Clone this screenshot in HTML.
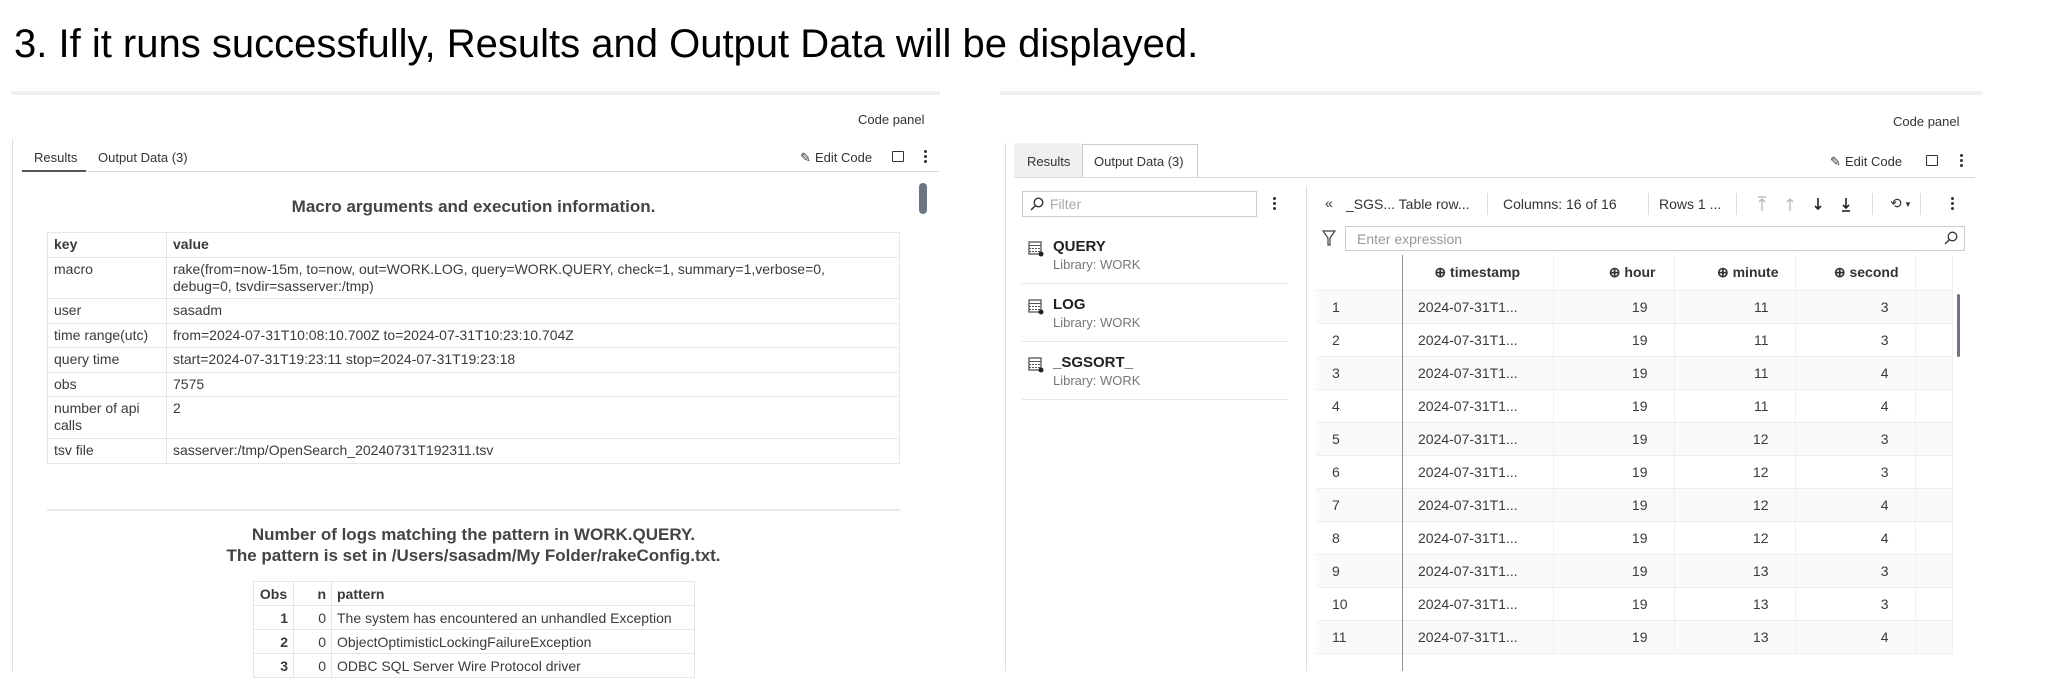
<!DOCTYPE html>
<html><head><meta charset="utf-8"><style>
*{margin:0;padding:0;box-sizing:border-box}
body{width:2062px;height:671px;background:#fff;font-family:"Liberation Sans",Arial,sans-serif;position:relative;overflow:hidden;color:#333}
.a{position:absolute;white-space:nowrap}
.t13{font-size:13px}
.kb{position:absolute;width:3px}
.kb i{display:block;width:3px;height:3px;background:#333;border-radius:50%;margin-bottom:2px}
table{border-collapse:collapse}
.mt td{border:1px solid #e6e6e6;font-size:14px;padding:3px 6px;vertical-align:top;color:#3a3a3a;line-height:17px}
.ot td{border:1px solid #e6e6e6;font-size:14px;padding:3px 5px;height:24px;color:#3a3a3a}
.dt td{font-size:14px;color:#3a3a3a;height:33px;border-bottom:1px solid #eee;border-right:1px solid #f0f0f0}
</style></head><body>
<div class="a" style="left:14px;top:22px;font-size:40px;color:#000">3. If it runs successfully, Results and Output Data will be displayed.</div>

<!-- LEFT PANEL -->
<div class="a" style="left:11px;top:91px;width:929px;height:4px;background:#eef0f2"></div>
<div class="a t13" style="left:858px;top:112px;color:#333">Code panel</div>
<div class="a" style="left:12px;top:139px;width:1px;height:532px;background:#ddd"></div>
<div class="a t13" style="left:34px;top:150px">Results</div>
<div class="a t13" style="left:98px;top:150px">Output Data (3)</div>
<div class="a" style="left:22px;top:171px;width:917px;height:1px;background:#d8dadd"></div>
<div class="a" style="left:22px;top:170px;width:64px;height:2px;background:#555"></div>
<div class="a" style="left:800px;top:150px;font-size:13px">✎</div>
<div class="a t13" style="left:815px;top:150px">Edit Code</div>
<div class="a" style="left:892px;top:151px;width:12px;height:11px;border:1.5px solid #333;border-radius:1px"></div>
<div class="kb" style="left:924px;top:150px"><i></i><i></i><i></i></div>
<div class="a" style="left:919px;top:183px;width:8px;height:31px;background:#6b7584;border-radius:4px"></div>
<div class="a" style="left:47px;top:197px;width:853px;text-align:center;font-size:17px;font-weight:600;color:#444">Macro arguments and execution information.</div>
<table class="mt a" style="left:47px;top:232px;width:853px">
<tr style="height:25px"><td style="width:119px;font-weight:bold">key</td><td style="font-weight:bold">value</td></tr>
<tr style="height:41px"><td>macro</td><td>rake(from=now-15m, to=now, out=WORK.LOG, query=WORK.QUERY, check=1, summary=1,verbose=0,<br>debug=0, tsvdir=sasserver:/tmp)</td></tr>
<tr style="height:25px"><td>user</td><td>sasadm</td></tr>
<tr style="height:24px"><td>time range(utc)</td><td>from=2024-07-31T10:08:10.700Z to=2024-07-31T10:23:10.704Z</td></tr>
<tr style="height:25px"><td>query time</td><td>start=2024-07-31T19:23:11 stop=2024-07-31T19:23:18</td></tr>
<tr style="height:24px"><td>obs</td><td>7575</td></tr>
<tr style="height:42px"><td>number of api<br>calls</td><td>2</td></tr>
<tr style="height:25px"><td>tsv file</td><td>sasserver:/tmp/OpenSearch_20240731T192311.tsv</td></tr>
</table>
<div class="a" style="left:47px;top:509px;width:853px;height:2px;background:#e6e8ea"></div>
<div class="a" style="left:47px;top:524px;width:853px;text-align:center;font-size:17px;font-weight:600;color:#444;line-height:21px">Number of logs matching the pattern in WORK.QUERY.<br>The pattern is set in /Users/sasadm/My Folder/rakeConfig.txt.</div>
<table class="ot a" style="left:253px;top:581px;width:442px">
<tr><td style="width:40px;font-weight:bold;text-align:center">Obs</td><td style="width:38px;font-weight:bold;text-align:right">n</td><td style="font-weight:bold">pattern</td></tr>
<tr><td style="font-weight:bold;text-align:right">1</td><td style="text-align:right">0</td><td>The system has encountered an unhandled Exception</td></tr>
<tr><td style="font-weight:bold;text-align:right">2</td><td style="text-align:right">0</td><td>ObjectOptimisticLockingFailureException</td></tr>
<tr><td style="font-weight:bold;text-align:right">3</td><td style="text-align:right">0</td><td>ODBC SQL Server Wire Protocol driver</td></tr>
</table>

<!-- RIGHT PANEL -->
<div class="a" style="left:1000px;top:91px;width:982px;height:4px;background:#eef0f2"></div>
<div class="a t13" style="left:1893px;top:114px">Code panel</div>
<div class="a" style="left:1005px;top:143px;width:1px;height:528px;background:#ddd"></div>
<div class="a" style="left:1014px;top:143px;width:68px;height:34px;background:#eef0f2"></div>
<div class="a t13" style="left:1027px;top:154px">Results</div>
<div class="a" style="left:1082px;top:144px;width:116px;height:34px;border:1px solid #c8cbd0;border-bottom:none;background:#fff"></div>
<div class="a t13" style="left:1094px;top:154px">Output Data (3)</div>
<div class="a" style="left:1014px;top:177px;width:961px;height:1px;background:#d8dadd"></div>
<div class="a" style="left:1830px;top:154px;font-size:13px">✎</div>
<div class="a t13" style="left:1845px;top:154px">Edit Code</div>
<div class="a" style="left:1926px;top:155px;width:12px;height:11px;border:1.5px solid #333;border-radius:1px"></div>
<div class="kb" style="left:1960px;top:154px"><i></i><i></i><i></i></div>

<div class="a" style="left:1022px;top:191px;width:235px;height:26px;border:1px solid #ccc"></div>
<svg class="a" style="left:1030px;top:197px" width="14" height="14"><circle cx="8.5" cy="5.5" r="4.3" fill="none" stroke="#333" stroke-width="1.4"/><line x1="5.5" y1="8.5" x2="1" y2="13" stroke="#333" stroke-width="1.5"/></svg>
<div class="a" style="left:1050px;top:196px;font-size:14px;color:#aaa">Filter</div>
<div class="kb" style="left:1273px;top:197px"><i></i><i></i><i></i></div>
<div class="a" style="left:1306px;top:186px;width:1px;height:485px;background:#ddd"></div>

<svg class="a" style="left:1028px;top:241px" width="16" height="16"><rect x="1" y="1" width="12" height="12" fill="none" stroke="#555" stroke-width="1.3"/><line x1="1" y1="4.5" x2="13" y2="4.5" stroke="#555"/><line x1="1" y1="7.5" x2="13" y2="7.5" stroke="#555" stroke-dasharray="2 1"/><line x1="1" y1="10.5" x2="13" y2="10.5" stroke="#555" stroke-dasharray="2 1"/><circle cx="13" cy="13" r="2.5" fill="#222"/></svg>
<div class="a" style="left:1053px;top:238px;font-size:15px;font-weight:bold;color:#222">QUERY</div>
<div class="a t13" style="left:1053px;top:257px;color:#777">Library: WORK</div>
<div class="a" style="left:1022px;top:283px;width:266px;height:1px;background:#e6e6e6"></div>
<svg class="a" style="left:1028px;top:299px" width="16" height="16"><rect x="1" y="1" width="12" height="12" fill="none" stroke="#555" stroke-width="1.3"/><line x1="1" y1="4.5" x2="13" y2="4.5" stroke="#555"/><line x1="1" y1="7.5" x2="13" y2="7.5" stroke="#555" stroke-dasharray="2 1"/><line x1="1" y1="10.5" x2="13" y2="10.5" stroke="#555" stroke-dasharray="2 1"/><circle cx="13" cy="13" r="2.5" fill="#222"/></svg>
<div class="a" style="left:1053px;top:296px;font-size:15px;font-weight:bold;color:#222">LOG</div>
<div class="a t13" style="left:1053px;top:315px;color:#777">Library: WORK</div>
<div class="a" style="left:1022px;top:341px;width:266px;height:1px;background:#e6e6e6"></div>
<svg class="a" style="left:1028px;top:357px" width="16" height="16"><rect x="1" y="1" width="12" height="12" fill="none" stroke="#555" stroke-width="1.3"/><line x1="1" y1="4.5" x2="13" y2="4.5" stroke="#555"/><line x1="1" y1="7.5" x2="13" y2="7.5" stroke="#555" stroke-dasharray="2 1"/><line x1="1" y1="10.5" x2="13" y2="10.5" stroke="#555" stroke-dasharray="2 1"/><circle cx="13" cy="13" r="2.5" fill="#222"/></svg>
<div class="a" style="left:1053px;top:354px;font-size:15px;font-weight:bold;color:#222">_SGSORT_</div>
<div class="a t13" style="left:1053px;top:373px;color:#777">Library: WORK</div>
<div class="a" style="left:1022px;top:399px;width:266px;height:1px;background:#e6e6e6"></div>

<!-- toolbar -->
<div class="a" style="left:1325px;top:195px;font-size:14px">«</div>
<div class="a" style="left:1346px;top:196px;font-size:14px">_SGS... Table row...</div>
<div class="a" style="left:1487px;top:193px;width:1px;height:22px;background:#ddd"></div>
<div class="a" style="left:1503px;top:196px;font-size:14px">Columns: 16 of 16</div>
<div class="a" style="left:1648px;top:193px;width:1px;height:22px;background:#ddd"></div>
<div class="a" style="left:1659px;top:196px;font-size:14px">Rows 1 ...</div>
<div class="a" style="left:1736px;top:193px;width:1px;height:22px;background:#ddd"></div>
<svg class="a" style="left:1755px;top:196px" width="100" height="16"><g stroke="#bbb" stroke-width="1.4" fill="none"><line x1="3" y1="1" x2="11" y2="1"/><line x1="7" y1="3" x2="7" y2="15"/><path d="M4 6 L7 3 L10 6"/><line x1="35" y1="3" x2="35" y2="15"/><path d="M32 6 L35 3 L38 6"/></g><g stroke="#222" stroke-width="1.6" fill="none"><line x1="63" y1="2" x2="63" y2="13"/><path d="M60 10 L63 13 L66 10"/><line x1="91" y1="2" x2="91" y2="12"/><path d="M88 9 L91 12 L94 9"/><line x1="87" y1="15" x2="95" y2="15"/></g></svg>
<div class="a" style="left:1872px;top:193px;width:1px;height:22px;background:#ddd"></div>
<div class="a" style="left:1890px;top:195px;font-size:14px">⟲<span style="font-size:8px;vertical-align:middle"> ▼</span></div>
<div class="a" style="left:1920px;top:193px;width:1px;height:22px;background:#ddd"></div>
<div class="kb" style="left:1951px;top:197px"><i></i><i></i><i></i></div>

<svg class="a" style="left:1322px;top:230px" width="14" height="16"><path d="M1 1 H13 L8 8 V15 H6 V8 Z" fill="none" stroke="#444" stroke-width="1.2"/></svg>
<div class="a" style="left:1345px;top:226px;width:620px;height:25px;border:1px solid #ccc"></div>
<div class="a" style="left:1357px;top:231px;font-size:14px;color:#999">Enter expression</div>
<svg class="a" style="left:1944px;top:231px" width="14" height="14"><circle cx="8.5" cy="5.5" r="4.3" fill="none" stroke="#333" stroke-width="1.3"/><line x1="5.5" y1="8.5" x2="1" y2="13" stroke="#333" stroke-width="1.4"/></svg>

<!-- data table -->
<table class="dt a" style="left:1316px;top:255px;width:637px">
<tr style="height:35px"><td style="width:86px;border-right:none"></td><td style="width:151px;text-align:center;font-weight:600;color:#333">⊕ timestamp</td><td style="width:121px;text-align:right;padding-right:18px;font-weight:600;color:#333">⊕ hour</td><td style="width:121px;text-align:right;padding-right:16px;font-weight:600;color:#333">⊕ minute</td><td style="width:120px;text-align:right;padding-right:16px;font-weight:600;color:#333">⊕ second</td><td></td></tr>
<tr style="background:#fafafa"><td style="padding-left:16px;border-right:none">1</td><td style="padding-left:16px">2024-07-31T1...</td><td style="text-align:right;padding-right:26px">19</td><td style="text-align:right;padding-right:26px">11</td><td style="text-align:right;padding-right:26px">3</td><td></td></tr>
<tr><td style="padding-left:16px;border-right:none">2</td><td style="padding-left:16px">2024-07-31T1...</td><td style="text-align:right;padding-right:26px">19</td><td style="text-align:right;padding-right:26px">11</td><td style="text-align:right;padding-right:26px">3</td><td></td></tr>
<tr style="background:#fafafa"><td style="padding-left:16px;border-right:none">3</td><td style="padding-left:16px">2024-07-31T1...</td><td style="text-align:right;padding-right:26px">19</td><td style="text-align:right;padding-right:26px">11</td><td style="text-align:right;padding-right:26px">4</td><td></td></tr>
<tr><td style="padding-left:16px;border-right:none">4</td><td style="padding-left:16px">2024-07-31T1...</td><td style="text-align:right;padding-right:26px">19</td><td style="text-align:right;padding-right:26px">11</td><td style="text-align:right;padding-right:26px">4</td><td></td></tr>
<tr style="background:#fafafa"><td style="padding-left:16px;border-right:none">5</td><td style="padding-left:16px">2024-07-31T1...</td><td style="text-align:right;padding-right:26px">19</td><td style="text-align:right;padding-right:26px">12</td><td style="text-align:right;padding-right:26px">3</td><td></td></tr>
<tr><td style="padding-left:16px;border-right:none">6</td><td style="padding-left:16px">2024-07-31T1...</td><td style="text-align:right;padding-right:26px">19</td><td style="text-align:right;padding-right:26px">12</td><td style="text-align:right;padding-right:26px">3</td><td></td></tr>
<tr style="background:#fafafa"><td style="padding-left:16px;border-right:none">7</td><td style="padding-left:16px">2024-07-31T1...</td><td style="text-align:right;padding-right:26px">19</td><td style="text-align:right;padding-right:26px">12</td><td style="text-align:right;padding-right:26px">4</td><td></td></tr>
<tr><td style="padding-left:16px;border-right:none">8</td><td style="padding-left:16px">2024-07-31T1...</td><td style="text-align:right;padding-right:26px">19</td><td style="text-align:right;padding-right:26px">12</td><td style="text-align:right;padding-right:26px">4</td><td></td></tr>
<tr style="background:#fafafa"><td style="padding-left:16px;border-right:none">9</td><td style="padding-left:16px">2024-07-31T1...</td><td style="text-align:right;padding-right:26px">19</td><td style="text-align:right;padding-right:26px">13</td><td style="text-align:right;padding-right:26px">3</td><td></td></tr>
<tr><td style="padding-left:16px;border-right:none">10</td><td style="padding-left:16px">2024-07-31T1...</td><td style="text-align:right;padding-right:26px">19</td><td style="text-align:right;padding-right:26px">13</td><td style="text-align:right;padding-right:26px">3</td><td></td></tr>
<tr style="background:#fafafa"><td style="padding-left:16px;border-right:none">11</td><td style="padding-left:16px">2024-07-31T1...</td><td style="text-align:right;padding-right:26px">19</td><td style="text-align:right;padding-right:26px">13</td><td style="text-align:right;padding-right:26px">4</td><td></td></tr>
</table>
<div class="a" style="left:1402px;top:255px;width:1px;height:416px;background:#8a93a0"></div>
<div class="a" style="left:1957px;top:294px;width:3px;height:63px;background:#6b7584;border-radius:2px"></div>
</body></html>
